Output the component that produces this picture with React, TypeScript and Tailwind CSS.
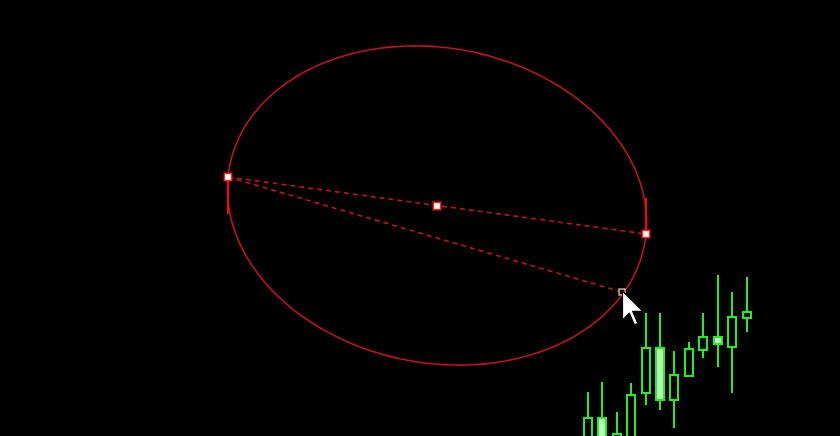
import React from "react";

type Candle = { x: number; hi: number; lo: number; top: number; bot: number; filled?: boolean };

const candles: Candle[] = [
  { x: 588, hi: 392, lo: 440, top: 418, bot: 440 },
  { x: 602, hi: 382, lo: 440, top: 418, bot: 440, filled: true },
  { x: 617, hi: 412, lo: 440, top: 434, bot: 440 },
  { x: 631, hi: 383, lo: 440, top: 395, bot: 440 },
  { x: 646, hi: 313, lo: 405, top: 348, bot: 393 },
  { x: 660, hi: 313, lo: 410, top: 348, bot: 400, filled: true },
  { x: 674, hi: 351, lo: 428, top: 375, bot: 400 },
  { x: 689, hi: 342, lo: 377, top: 349, bot: 376 },
  { x: 703, hi: 313, lo: 358, top: 337, bot: 350 },
  { x: 718, hi: 275, lo: 367, top: 337, bot: 344, filled: true },
  { x: 732, hi: 292, lo: 393, top: 317, bot: 347 },
  { x: 747, hi: 277, lo: 332, top: 312, bot: 318 },
];

// ellipse from two conjugate half-diameters around the centre
function ellipsePath() {
  const cx = 437, cy = 205.5;
  const u = [-209, -28.5];
  const v = [15.6, -157];
  const pts: string[] = [];
  for (let i = 0; i <= 240; i++) {
    const t = (i / 240) * Math.PI * 2;
    const x = cx + u[0] * Math.cos(t) + v[0] * Math.sin(t);
    const y = cy + u[1] * Math.cos(t) + v[1] * Math.sin(t);
    pts.push(`${i === 0 ? "M" : "L"}${x.toFixed(1)} ${y.toFixed(1)}`);
  }
  return pts.join(" ") + " Z";
}

function Handle({ x, y }: { x: number; y: number }) {
  return (
    <g>
      <rect x={x - 5} y={y - 5} width={10} height={10} fill="#ff1010" opacity={0.35} />
      <rect x={x - 3.5} y={y - 3.5} width={7} height={7} fill="#fff4f4" stroke="#ff2020" strokeWidth={1.2} />
    </g>
  );
}

export default function App() {
  const red = "#c4121c";
  const green = "#22ee22";
  return (
    <div className="w-[840px] h-[436px] bg-black overflow-hidden">
      <svg width="840" height="436" viewBox="0 0 840 436" className="block">
        <path d={ellipsePath()} fill="none" stroke={red} strokeWidth={1.6} />
        <line x1={228} y1={177} x2={228} y2={214} stroke="#e01010" strokeWidth={2.2} />
        <line x1={646} y1={198} x2={646} y2={234} stroke="#e01010" strokeWidth={2.2} />

        <line x1={228} y1={177} x2={646} y2={234} stroke={red} strokeWidth={1.6} strokeDasharray="5 4" />
        <line x1={228} y1={177} x2={622} y2={292} stroke={red} strokeWidth={1.6} strokeDasharray="5 4" />

        <Handle x={228} y={177} />
        <Handle x={437} y={206} />
        <Handle x={646} y={234} />
        <rect x={619} y={289} width={6} height={6} fill="#300" stroke="#f0d0d0" strokeWidth={1.2} />

        {candles.map((c) => (
          <g key={c.x}>
            <line x1={c.x} y1={c.hi} x2={c.x} y2={c.top} stroke={green} strokeWidth={2} />
            <line x1={c.x} y1={c.bot} x2={c.x} y2={c.lo} stroke={green} strokeWidth={2} />
            <rect
              x={c.x - 4}
              y={c.top}
              width={8}
              height={Math.max(c.bot - c.top, 2)}
              fill={c.filled ? "#b8ffb8" : "#000"}
              stroke={green}
              strokeWidth={2}
            />
          </g>
        ))}

        <path
          d="M0 0 L0 17 L4 13 L7 20 L9 19 L6 12 L12 12 Z"
          transform="translate(622.5 291) scale(1.7)"
          fill="#fff"
          stroke="#000"
          strokeWidth={0.7}
          strokeLinejoin="round"
        />
      </svg>
    </div>
  );
}
